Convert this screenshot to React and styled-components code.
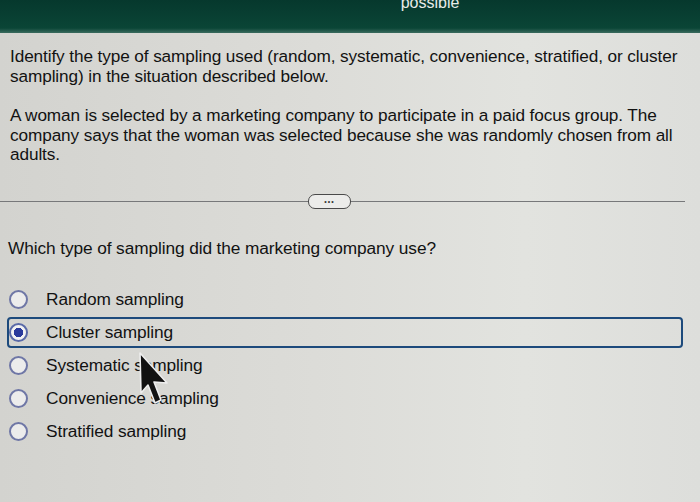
import styled, { createGlobalStyle } from 'styled-components';

const GlobalStyle = createGlobalStyle`
  html, body {
    margin: 0;
    padding: 0;
  }
  body {
    width: 700px;
    height: 502px;
    overflow: hidden;
    font-family: "Liberation Sans", Arial, sans-serif;
  }
`;

const options = [
  'Random sampling',
  'Cluster sampling',
  'Systematic sampling',
  'Convenience sampling',
  'Stratified sampling',
];

const App = () => {
  return (
    <Page>
      <GlobalStyle />
      <Header>
        <HeaderText>possible</HeaderText>
      </Header>

      <Body>
        <Prompt>
          Identify the type of sampling used (random, systematic, convenience, stratified, or cluster
          <br />
          sampling) in the situation described below.
        </Prompt>
        <Prompt>
          A woman is selected by a marketing company to participate in a paid focus group. The
          <br />
          company says that the woman was selected because she was randomly chosen from all
          <br />
          adults.
        </Prompt>
      </Body>

      <Divider>
        <DividerLine width="308px" />
        <MoreButton>•••</MoreButton>
        <DividerLine />
      </Divider>

      <Question>Which type of sampling did the marketing company use?</Question>

      <OptionList>
        {options.map((label, i) => (
          <OptionRow key={label} selected={i === 1}>
            <Radio selected={i === 1} />
            <OptionLabel>{label}</OptionLabel>
          </OptionRow>
        ))}
        <Cursor viewBox="0 0 32 54" width="32" height="54">
          <path
            d="M2 1 L3 41 L10 33 L17 51 L23 48 L16 30 L29 31 Z"
            fill="#121212"
            stroke="#eeeeee"
            strokeWidth="1.6"
            strokeLinejoin="round"
          />
        </Cursor>
      </OptionList>
    </Page>
  );
};

const Page = styled.div`
  width: 700px;
  height: 502px;
  background: linear-gradient(90deg, #d3d3cf 0%, #dcdcd8 45%, #e2e3df 75%, #dddedb 100%);
  color: #121212;
  display: flex;
  flex-direction: column;
`;

const Header = styled.div`
  height: 33px;
  flex-shrink: 0;
  background: linear-gradient(180deg, #06382d 0%, #0a4536 85%, #3a6b5e 100%);
  display: flex;
  justify-content: center;
  padding-left: 160px;
  overflow: hidden;
`;

const HeaderText = styled.div`
  color: #e8ece9;
  font-size: 16px;
  line-height: 1;
  margin-top: -5px;
`;

const Body = styled.div`
  padding: 14px 0 0 10px;
  display: flex;
  flex-direction: column;
  gap: 20px;
`;

const Prompt = styled.p`
  margin: 0;
  font-size: 17.2px;
  line-height: 19.5px;
  letter-spacing: -0.1px;
  white-space: nowrap;
`;

const Divider = styled.div`
  margin-top: 29px;
  display: flex;
  align-items: center;
  padding-right: 15px;
`;

const DividerLine = styled.div`
  flex: ${p => (p.width ? '0 0 ' + p.width : '1')};
  height: 1px;
  background: #77787a;
`;

const MoreButton = styled.div`
  width: 41px;
  height: 13px;
  border: 1.5px solid #4a4a4a;
  border-radius: 7px;
  background: #ececea;
  font-size: 7px;
  line-height: 13px;
  text-align: center;
  color: #333;
  letter-spacing: 1px;
`;

const Question = styled.div`
  margin-top: 29px;
  padding-left: 8px;
  font-size: 17.3px;
  line-height: 20px;
  letter-spacing: -0.1px;
`;

const OptionList = styled.div`
  position: relative;
  margin-top: 26px;
  padding: 0 17px 0 7px;
  display: flex;
  flex-direction: column;
  gap: 2px;
`;

const OptionRow = styled.div`
  height: 31px;
  display: flex;
  align-items: center;
  gap: 18px;
  padding-left: 0;
  box-sizing: border-box;
  border: 2.5px solid ${p => (p.selected ? '#1d4a7c' : 'transparent')};
  border-radius: 4px;
`;

const Radio = styled.span`
  width: 15px;
  height: 15px;
  border-radius: 50%;
  border: 2px solid ${p => (p.selected ? '#5a6aa8' : '#6f77a6')};
  background: ${p => (p.selected ? 'radial-gradient(circle, #2a3a9c 0 4.5px, #f2f2f2 5px)' : '#ececec')};
  flex-shrink: 0;
`;

const OptionLabel = styled.span`
  font-size: 17.3px;
  letter-spacing: -0.1px;
`;

const Cursor = styled.svg`
  position: absolute;
  left: 138px;
  top: 68px;
`;

export default App;
